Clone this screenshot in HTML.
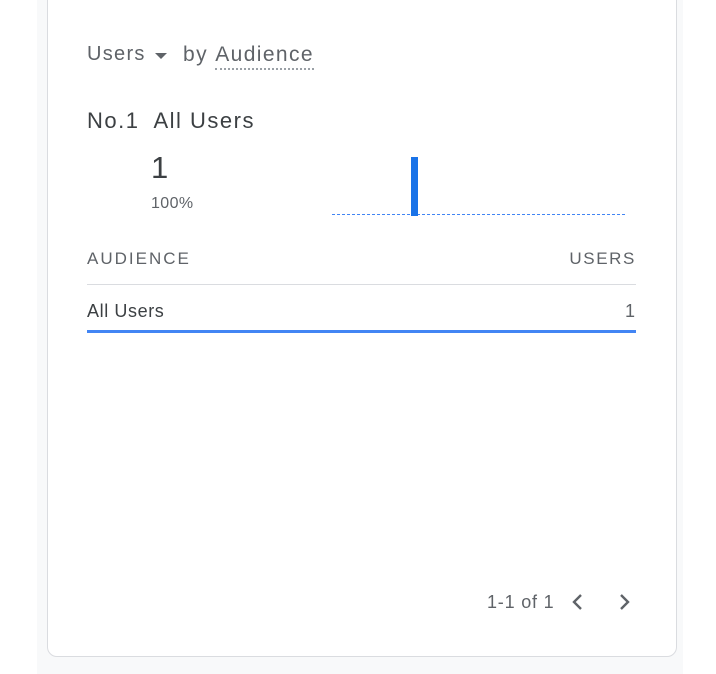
<!DOCTYPE html>
<html><head><meta charset="utf-8"><style>
html,body{margin:0;padding:0;width:716px;height:674px;background:#fff;overflow:hidden;font-family:"Liberation Sans",Arial,sans-serif;}
.bg{position:absolute;left:37px;top:0;width:646px;height:674px;background:#f8f9fa;}
.card{position:absolute;left:47px;top:-10px;width:630px;height:667px;background:#fff;border:1px solid #dadce0;border-radius:10px;box-sizing:border-box;}
.t{position:absolute;color:#5f6368;white-space:nowrap;}
</style></head><body>
<div class="bg"></div>
<div class="card"></div>
<div class="t" style="left:87px;top:43px;font-size:20px;letter-spacing:1.3px;">Users</div>
<svg style="position:absolute;left:154px;top:52px" width="14" height="8"><path d="M1 1 L13 1 L7 7 Z" fill="#5f6368"/></svg>
<div class="t" style="left:183px;top:43px;font-size:21px;letter-spacing:1.4px;">by&nbsp;<span style="border-bottom:2px dotted #9aa0a6;padding-bottom:2px">Audience</span></div>
<div class="t" style="left:87px;top:108px;font-size:22px;letter-spacing:1.5px;color:#3c4043">No.1&nbsp; All Users</div>
<div class="t" style="left:151px;top:150px;font-size:31px;color:#3c4043">1</div>
<div class="t" style="left:151px;top:195px;font-size:16px;letter-spacing:0.4px">100%</div>
<div style="position:absolute;left:332px;top:214px;width:293px;border-top:1.5px dashed #4285f4;"></div>
<div style="position:absolute;left:411px;top:157px;width:7px;height:59px;background:#1a73e8;"></div>
<div class="t" style="left:87px;top:249px;font-size:17px;letter-spacing:2px;">AUDIENCE</div>
<div class="t" style="right:80px;top:249px;font-size:17px;letter-spacing:1.6px;">USERS</div>
<div style="position:absolute;left:87px;top:284px;width:549px;height:1px;background:#dadce0"></div>
<div class="t" style="left:87px;top:301px;font-size:18px;letter-spacing:0.6px;color:#3c4043">All Users</div>
<div class="t" style="right:81px;top:301px;font-size:18px;">1</div>
<div style="position:absolute;left:87px;top:330px;width:549px;height:3px;background:#4285f4"></div>
<div class="t" style="left:487px;top:592px;font-size:18px;letter-spacing:0.8px">1-1 of 1</div>
<svg style="position:absolute;left:570px;top:593px" width="14" height="18"><path d="M11 2 L4 9 L11 16" fill="none" stroke="#5f6368" stroke-width="2.4"/></svg>
<svg style="position:absolute;left:618px;top:593px" width="14" height="18"><path d="M3 2 L10 9 L3 16" fill="none" stroke="#5f6368" stroke-width="2.4"/></svg>
</body></html>
